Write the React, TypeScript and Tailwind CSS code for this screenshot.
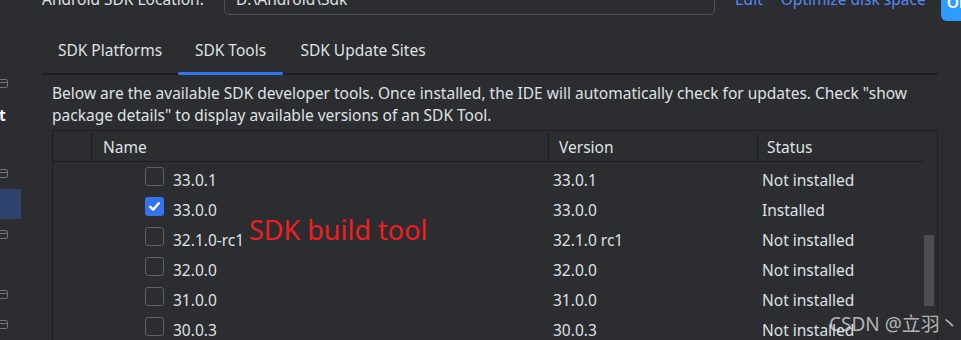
import React from "react";

const rows = [
  { name: "33.0.1", version: "33.0.1", status: "Not installed", checked: false },
  { name: "33.0.0", version: "33.0.0", status: "Installed", checked: true },
  { name: "32.1.0-rc1", version: "32.1.0 rc1", status: "Not installed", checked: false },
  { name: "32.0.0", version: "32.0.0", status: "Not installed", checked: false },
  { name: "31.0.0", version: "31.0.0", status: "Not installed", checked: false },
  { name: "30.0.3", version: "30.0.3", status: "Not installed", checked: false },
];

function SideIcon() {
  return (
    <div className="ml-[-4px] w-[12px] h-[9px] rounded-[2px] border border-[#6f737a] flex flex-col">
      <div className="h-[3px] border-b border-[#6f737a]" />
    </div>
  );
}

function Checkbox({ checked }: { checked: boolean }) {
  if (checked) {
    return (
      <div className="w-[19px] h-[19px] mt-[-5px] shrink-0 rounded-[3px] bg-[#3574f0] flex items-center justify-center">
        <svg width="13" height="13" viewBox="0 0 13 13" fill="none">
          <path d="M2.2 6.8 L5.2 9.6 L10.8 3.2" stroke="#ffffff" strokeWidth="2.4" strokeLinecap="round" strokeLinejoin="round" />
        </svg>
      </div>
    );
  }
  return <div className="w-[19px] h-[19px] mt-[-5px] shrink-0 rounded-[3px] border border-[#5e6167] bg-[#2b2d30]" />;
}

export default function App() {
  return (
    <div className="w-[961px] h-[340px] overflow-hidden bg-[#2b2d30] flex font-['Noto_Sans',sans-serif] text-[15.5px] text-[#dfe1e5] relative">
      {/* sidebar */}
      <div className="w-[42px] shrink-0 flex flex-col pt-[68px]">
        <div className="w-[21px] h-[31px] flex items-center"><SideIcon /></div>
        <div className="w-[21px] h-[31px] flex items-center font-bold text-white ml-[-1px] pt-[5px]">t</div>
        <div className="w-[21px] h-[31px]" />
        <div className="w-[21px] h-[31px] flex items-center"><SideIcon /></div>
        <div className="w-[21px] h-[31px] bg-[#2e436e]" />
        <div className="w-[21px] h-[31px] flex items-center"><SideIcon /></div>
        <div className="w-[21px] h-[31px]" />
        <div className="w-[21px] h-[31px] flex items-center"><SideIcon /></div>
        <div className="w-[21px] h-[31px] flex items-center"><SideIcon /></div>
      </div>

      {/* main */}
      <div className="w-[919px] shrink-0 flex flex-col">
        {/* top row */}
        <div className="h-[30px] mt-[-15px] flex items-center shrink-0 whitespace-nowrap">
          <div className="w-[182px] shrink-0">Android SDK Location:</div>
          <div className="w-[491px] h-[30px] shrink-0 rounded-[5px] border border-[#4e5157] flex items-center pl-[11px]">D:\Android\Sdk</div>
          <div className="ml-[20px] shrink-0 text-[#548af7]">Edit</div>
          <div className="ml-[18px] shrink-0 text-[#548af7]">Optimize disk space</div>
          <div className="ml-[15px] shrink-0 h-[36px] mt-[6px] w-[40px] rounded-[6px] bg-[#2f9bff] text-white flex items-center pl-[6px] font-semibold">OK</div>
        </div>

        {/* tabs */}
        <div className="mt-[13px] w-[896px] h-[47px] flex items-stretch border-b-2 border-[#1e1f22] shrink-0 whitespace-nowrap">
          <div className="w-[136px] flex items-center justify-center">SDK Platforms</div>
          <div className="w-[105px] flex flex-col items-center justify-center relative">
            <span>SDK Tools</span>
            <div className="absolute left-0 right-0 bottom-[-2px] h-[3px] rounded-full bg-[#3574f0]" />
          </div>
          <div className="w-[160px] flex items-center justify-center">SDK Update Sites</div>
        </div>

        {/* description */}
        <div className="pl-[10px] pt-[7px] leading-[22px] shrink-0 whitespace-nowrap">
          Below are the available SDK developer tools. Once installed, the IDE will automatically check for updates. Check "show
          <br />
          package details" to display available versions of an SDK Tool.
        </div>

        {/* table */}
        <div className="ml-[10px] mt-[4px] w-[886px] flex-1 border-t border-l border-r border-[#1e1f22] flex">
          <div className="w-[873px] flex flex-col">
            <div className="h-[31px] flex border-b border-[#1e1f22] items-center shrink-0">
              <div className="w-[39px] h-[27px] border-r border-[#1e1f22]" />
              <div className="w-[457px] h-[27px] border-r border-[#1e1f22] pl-[11px] flex items-center pt-[3px]">Name</div>
              <div className="w-[209px] h-[27px] border-r border-[#1e1f22] pl-[10px] flex items-center pt-[3px]">Version</div>
              <div className="flex-1 pl-[9px] flex items-center pt-[3px]">Status</div>
            </div>
            <div className="pt-[2px] flex flex-col">
              {rows.map((r) => (
                <div key={r.name} className="h-[30px] flex items-center shrink-0 whitespace-nowrap">
                  <div className="w-[92px] shrink-0" />
                  <div className="w-[404px] shrink-0 flex items-center">
                    <Checkbox checked={r.checked} />
                    <span className="ml-[9px] pt-[4px]">{r.name}</span>
                  </div>
                  <div className="w-[209px] shrink-0 pl-[4px] pt-[4px]">{r.version}</div>
                  <div className="flex-1 pl-[4px] pt-[4px]">{r.status}</div>
                </div>
              ))}
            </div>
          </div>
          <div className="w-[13px] flex flex-col pt-[104px]">
            <div className="w-[10px] h-[71px] bg-[#4b4d52]" />
          </div>
        </div>
      </div>

      {/* overlays */}
      <div className="absolute left-[249px] top-[212px] text-[27px] leading-[36px] text-[#f01e1e] whitespace-nowrap">SDK build tool</div>
      <div className="absolute left-[829px] top-[311px] text-[19px] leading-[26px] text-[#d8d8d8]/80 whitespace-nowrap font-['Noto_Sans','Noto_Sans_CJK_SC',sans-serif]">CSDN @立羽丶</div>
    </div>
  );
}
